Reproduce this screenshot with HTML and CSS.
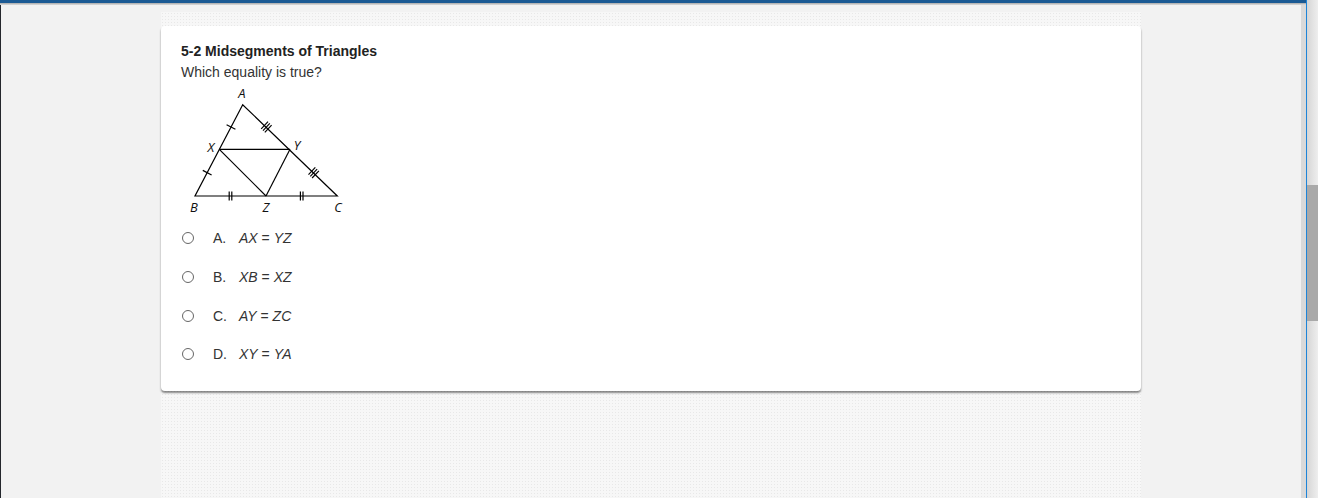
FILE: index.html
```html
<!DOCTYPE html>
<html>
<head>
<meta charset="utf-8">
<link rel="stylesheet" href="styles.css">
</head>
<body>
<div class="frame">
  <div class="topbar"></div>
  <div class="topshadow"></div>
  <div class="row">
    <div class="leftedge"></div>
    <div class="main">
      <div class="column">
        <div class="card">
          <div class="title">5-2 Midsegments of Triangles</div>
          <div class="question">Which equality is true?</div>
          <svg class="figure" width="170" height="130" viewBox="0 0 170 130">
            <g stroke="#000" stroke-width="1.2" fill="none">
              <polygon points="61.7,20.7 14,112 156.3,112"/>
              <line x1="38.3" y1="65.3" x2="109" y2="65.3"/>
              <line x1="38.3" y1="65.3" x2="85" y2="112"/>
              <line x1="109" y1="65.3" x2="85" y2="112"/>
              <line x1="45.6" y1="40.7" x2="54.4" y2="45.3"/>
              <line x1="21.8" y1="86.4" x2="30.6" y2="91"/>
              <line x1="80.2" y1="44.9" x2="87" y2="37.7"/>
              <line x1="82" y1="46.6" x2="88.8" y2="39.4"/>
              <line x1="83.8" y1="48.3" x2="90.6" y2="41.1"/>
              <line x1="127.5" y1="90.6" x2="134.3" y2="83.4"/>
              <line x1="129.3" y1="92.3" x2="136.1" y2="85.1"/>
              <line x1="131.1" y1="94" x2="137.9" y2="86.8"/>
              <line x1="48.2" y1="107.5" x2="48.2" y2="116.5"/>
              <line x1="50.8" y1="107.5" x2="50.8" y2="116.5"/>
              <line x1="119.4" y1="107.5" x2="119.4" y2="116.5"/>
              <line x1="122" y1="107.5" x2="122" y2="116.5"/>
            </g>
            <g class="lbl" text-anchor="middle">
              <text x="61" y="14">A</text>
              <text x="30" y="68">X</text>
              <text x="116" y="66">Y</text>
              <text x="13" y="128">B</text>
              <text x="85" y="128">Z</text>
              <text x="157" y="128">C</text>
            </g>
          </svg>
          <ul class="options">
            <li class="option"><span class="radio"></span><span class="letter">A.</span><span class="eq"><i>AX</i> = <i>YZ</i></span></li>
            <li class="option"><span class="radio"></span><span class="letter">B.</span><span class="eq"><i>XB</i> = <i>XZ</i></span></li>
            <li class="option"><span class="radio"></span><span class="letter">C.</span><span class="eq"><i>AY</i> = <i>ZC</i></span></li>
            <li class="option"><span class="radio"></span><span class="letter">D.</span><span class="eq"><i>XY</i> = <i>YA</i></span></li>
          </ul>
        </div>
      </div>
    </div>
    <div class="band"></div>
  </div>
</div>
<div class="vline"></div>
<div class="scrollbar"><div class="thumb"></div></div>
</body>
</html>
```

FILE: styles.css
```css
html, body {
  margin: 0;
  padding: 0;
  height: 498px;
  overflow: hidden;
}
body {
  display: flex;
  font-family: "Liberation Sans", Arial, sans-serif;
  background: #f2f2f2;
}
.frame {
  flex: 1;
  display: flex;
  flex-direction: column;
  min-width: 0;
}
.topbar {
  height: 3px;
  background: #1b5a94;
}
.topshadow {
  height: 2px;
  background: linear-gradient(#a9a9a9, #dedede);
}
.row {
  flex: 1;
  display: flex;
}
.leftedge {
  width: 1px;
  background: #24272c;
}
.main {
  flex: 1;
  display: flex;
  justify-content: center;
  background: #f2f2f2;
  padding-top: 7px;
}
.band {
  width: 5px;
  background: #d9d9d9;
}
.column {
  width: 980px;
  padding-top: 14px;
  background-color: #f7f7f7;
  background-image: radial-gradient(circle, #e8e8e8 0.7px, transparent 1px);
  background-size: 3px 3px;
}
.card {
  background: #fff;
  border-radius: 4px;
  padding: 17px 20px 17px;
  box-shadow: 0 2px 2px rgba(0, 0, 0, 0.45);
}
.title {
  font-size: 14px;
  font-weight: bold;
  color: #222;
  line-height: 16px;
}
.question {
  font-size: 14px;
  color: #333;
  line-height: 18px;
  margin-top: 4px;
}
.figure {
  display: block;
  margin-top: 3px;
  overflow: visible;
}
.lbl text {
  font-family: "Open Sans", "DejaVu Sans", sans-serif;
  font-style: italic;
  font-size: 13px;
  fill: #111;
}
.options {
  list-style: none;
  margin: 5px 0 0;
  padding: 0;
}
.option {
  height: 38.7px;
  display: flex;
  align-items: center;
  font-size: 14px;
  color: #333;
}
.radio {
  width: 10px;
  height: 10px;
  border: 1.5px solid #666;
  border-radius: 50%;
  margin-left: 1px;
  flex: none;
}
.letter {
  margin-left: 19px;
  width: 26px;
}
.eq i {
  font-style: italic;
}
.vline {
  width: 1px;
  background: #1d84d8;
}
.scrollbar {
  width: 11px;
  background: linear-gradient(90deg, #d6d6d6, #eeeeee);
  padding-top: 185px;
}
.thumb {
  height: 136px;
  background: #a9a9a9;
}
```
